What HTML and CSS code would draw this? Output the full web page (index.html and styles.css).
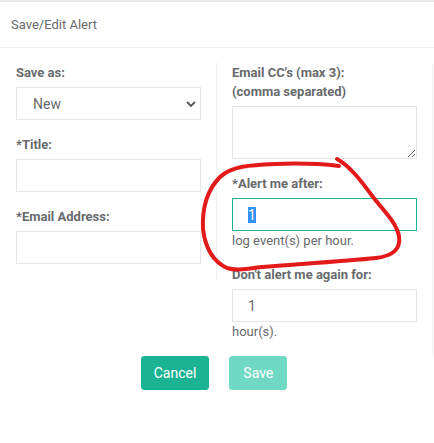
FILE: index.html
```html
<!DOCTYPE html>
<html lang="en">
<head>
<meta charset="utf-8">
<title>Save/Edit Alert</title>
<link rel="stylesheet" href="styles.css">
</head>
<body>
<div class="top-strip"></div>
<div class="header">Save/Edit Alert</div>
<div class="content">
  <div class="cols">
    <div class="col col-left">
      <div class="group">
        <label class="lbl">Save as:</label>
        <div class="select-wrap">
          <select class="ctl sel"><option>New</option></select>
          <svg class="chev" width="10" height="6" viewBox="0 0 10 6"><path d="M1 1 L5 5 L9 1" fill="none" stroke="#555" stroke-width="1.8"/></svg>
        </div>
      </div>
      <div class="group">
        <label class="lbl">*Title:</label>
        <input class="ctl" type="text">
      </div>
      <div class="group last">
        <label class="lbl">*Email Address:</label>
        <input class="ctl" type="text">
      </div>
    </div>
    <div class="col col-right">
      <div class="group">
        <label class="lbl">Email CC's (max 3):<br>(comma separated)</label>
        <textarea class="ctl area"></textarea>
      </div>
      <div class="group">
        <label class="lbl">*Alert me after:</label>
        <input id="alertAfter" class="ctl focus" type="text" value="1" autofocus>
        <div class="help">log event(s) per hour.</div>
      </div>
      <div class="group last">
        <label class="lbl">Don't alert me again for:</label>
        <input class="ctl" type="text" value="1">
        <div class="help">hour(s).</div>
      </div>
    </div>
  </div>
  <div class="actions">
    <button class="btn">Cancel</button>
    <button class="btn btn-disabled" disabled>Save</button>
  </div>
</div>
<svg class="scribble" width="434" height="443" viewBox="0 0 434 443">
  <path d="M337,159 C350,166 362,182 373,197 C384,211 396,222 399,236 C401,249 393,256 376,258 C346,261 300,264 262,267 C246,269 236,271 227,268 C212,261 205,246 203,229 C202,208 207,190 220,177 C232,166 250,165 275,164 C300,163 322,164 339,166" fill="none" stroke="#e21a1a" stroke-width="4" stroke-linecap="round" stroke-linejoin="round"/>
</svg>
<script src="script.js"></script>
</body>
</html>
```
FILE: styles.css
```css
html, body {
  margin: 0;
  padding: 0;
  background: #fff;
}
body {
  font-family: Roboto, "Liberation Sans", Arial, sans-serif;
  color: #676a6c;
  width: 434px;
  height: 443px;
  position: relative;
  overflow: hidden;
}
.top-strip {
  height: 2px;
  background: #e7eaec;
}
.header {
  padding: 15px 11px 14px;
  font-size: 13px;
  line-height: 16px;
  color: #676a6c;
  border-bottom: 1px solid #eceef0;
}
.content {
  padding-top: 15px;
}
.cols {
  display: flex;
  align-items: flex-start;
}
.col {
  width: 185px;
  padding: 0 15px 15px;
  border-right: 1px solid #f0f0f0;
}
.col-left {
  padding-left: 16px;
  padding-bottom: 16px;
}
.group {
  margin-bottom: 15px;
}
.group.last {
  margin-bottom: 0;
}
.lbl {
  display: block;
  font-weight: 700;
  font-size: 13px;
  line-height: 19px;
  margin-bottom: 5px;
  color: #676a6c;
}
.ctl {
  display: block;
  box-sizing: border-box;
  width: 185px;
  height: 33px;
  margin: 0;
  border: 1px solid #e5e6e7;
  border-radius: 0;
  padding: 0 15px;
  font-family: Roboto, "Liberation Sans", Arial, sans-serif;
  font-size: 14px;
  color: #676a6c;
  background: #fff;
  outline: none;
}
.select-wrap {
  position: relative;
}
.sel {
  -webkit-appearance: none;
  appearance: none;
  padding-left: 16px;
}
.chev {
  position: absolute;
  right: 5px;
  top: 14px;
}
.area {
  height: 53px;
  resize: both;
  padding: 6px 12px;
}
.focus {
  border-color: #1ab394;
}
.focus::selection {
  background: #3390ff;
  color: #fff;
}
.help {
  font-size: 13px;
  line-height: 19px;
  color: #676a6c;
}
.actions {
  display: flex;
  justify-content: center;
  gap: 20px;
  padding-right: 6px;
}
.btn {
  height: 34px;
  padding: 0 12px;
  border: 1px solid #1ab394;
  border-radius: 3px;
  background: #1ab394;
  color: #fff;
  font-family: Roboto, "Liberation Sans", Arial, sans-serif;
  font-size: 14px;
  line-height: 20px;
  cursor: pointer;
}
.btn-disabled {
  background: #6fd9c3;
  border-color: #6fd9c3;
  padding: 0 13px;
  cursor: default;
}
.scribble {
  position: absolute;
  left: 0;
  top: 0;
  pointer-events: none;
}
```
FILE: script.js
```js
var el = document.getElementById('alertAfter');
el.focus();
el.select();
```
